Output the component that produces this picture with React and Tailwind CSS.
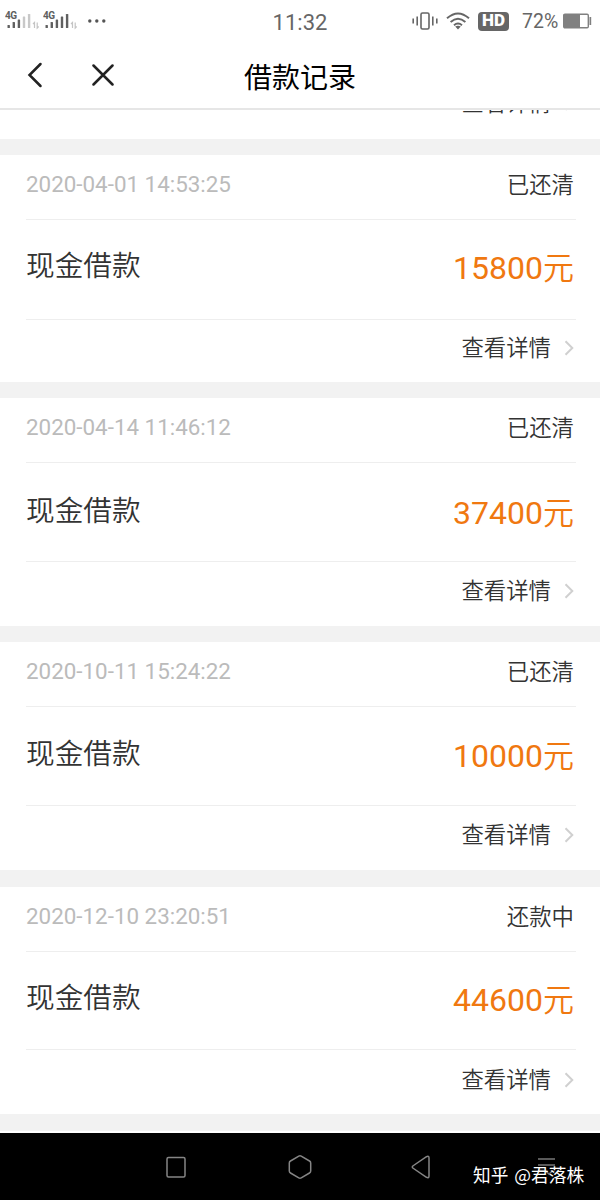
import React from "react";

const LATIN_CJK = "font-[Roboto,'Noto_Sans_CJK_SC',sans-serif]";

const records = [
  { time: "2020-04-01 14:53:25", status: "已还清", amount: "15800", rows: ["h-[65px]", "h-[100px]", "h-[62px]"], gap: "h-4", titlePad: "pb-[5px]", amountPad: "pb-[2px]", linkPad: "pb-[7px]" },
  { time: "2020-04-14 11:46:12", status: "已还清", amount: "37400", rows: ["h-[65px]", "h-[99px]", "h-[64px]"], gap: "h-4", titlePad: "pb-[1px]", amountPad: "pt-[2px]", linkPad: "pb-[6px]" },
  { time: "2020-10-11 15:24:22", status: "已还清", amount: "10000", rows: ["h-[65px]", "h-[99px]", "h-[64px]"], gap: "h-[17px]", titlePad: "pb-[3px]", amountPad: "pt-0", linkPad: "pb-[7px]" },
  { time: "2020-12-10 23:20:51", status: "还款中", amount: "44600", rows: ["h-[65px]", "h-[98px]", "h-[64px]"], gap: "h-[17px]", titlePad: "pb-[3px]", amountPad: "pt-0", linkPad: "pb-[5px]" },
];

function Signal({ bars }) {
  return (
    <svg width="38" height="24" viewBox="0 0 38 24">
      <text x="0" y="9.800" fontSize="10" fontWeight="700" fill="#606060" fontFamily="Roboto, sans-serif" textLength="12">4G</text>
      {[3, 6, 8.5, 11.5, 14].map((h, i) => (
        <rect key={i} x={2.5 + i * 5.1} y={19 - h} width="2.4" height={h} rx="0.6" fill={i < bars ? "#606060" : "#c8c8c8"} />
      ))}
      <path d="M29.500 19v-5.500l-1.500 1.500M32.200 13.500v5.500l1.500-1.500" fill="none" stroke="#c4c4c4" strokeWidth="1.200" />
    </svg>
  );
}

function StatusBar() {
  return (
    <div className="flex h-[42px] items-center text-[#666]">
      <div className="flex w-[200px] items-center pl-[5px]">
        <Signal bars={3} />
        <Signal bars={5} />
        <svg className="ml-[7px]" width="20" height="6" viewBox="0 0 20 6">
          <circle cx="1.800" cy="3" r="1.700" fill="#555" />
          <circle cx="8.800" cy="3" r="1.700" fill="#555" />
          <circle cx="15.800" cy="3" r="1.700" fill="#555" />
        </svg>
      </div>
      <div className="w-[200px] pt-[2px] text-center text-[22px]">11:32</div>
      <div className="flex w-[200px] items-center pl-[12px]">
        <svg width="26" height="18" viewBox="0 0 26 18" fill="none" stroke="#666" strokeWidth="1.600">
          <rect x="9" y="1" width="8" height="16" rx="1.500" />
          <path d="M5.200 4.500v9M1.200 6.500v5M20.800 4.500v9M24.800 6.500v5" />
        </svg>
        <svg className="ml-[8px]" width="24" height="18" viewBox="0 0 24 18" fill="none" stroke="#666" strokeWidth="1.900">
          <path d="M1 6.300Q12-3.500 23 6.300M4.600 10Q12 3.500 19.400 10M8 13.300Q12 9.800 16 13.300" />
          <path d="M9.200 14.500Q12 12.800 14.800 14.500L12 17.500Z" fill="#666" stroke="none" />
        </svg>
        <div className="ml-[8px] flex h-[19px] w-[31px] items-center justify-center rounded-[4px] bg-[#666] text-[17px] font-black text-white">HD</div>
        <div className="ml-[13px] w-[34px] pt-[1px] text-[19.500px] whitespace-nowrap">72%</div>
        <svg className="ml-[7px]" width="29" height="16" viewBox="0 0 29 16">
          <rect x="0.700" y="1.200" width="24.600" height="13.600" rx="1.200" fill="#fff" stroke="#808080" strokeWidth="1.400" />
          <rect x="1" y="1.500" width="16" height="13" fill="#808080" />
          <rect x="26.500" y="4" width="1.700" height="8" fill="#808080" />
        </svg>
      </div>
    </div>
  );
}

function DetailLink() {
  return (
    <div className="flex items-center">
      <span className="text-[22.4px] leading-8 font-[350] text-[#333]">查看详情</span>
      <svg className="ml-[13px]" width="10" height="16" viewBox="0 0 10 16" fill="none" stroke="#d0d0d0" strokeWidth="2">
        <path d="M1.500 1.200L8.300 8L1.500 14.800" />
      </svg>
    </div>
  );
}

function RecordCard({ time, status, amount, rows, gap, titlePad, amountPad, linkPad }) {
  return (
    <>
      <section className="bg-white pr-6 pl-[26px]">
        <div className={`flex items-center justify-between border-b border-[#eee] pr-[2px] pb-[5px] text-[22.4px] ${rows[0]}`}>
          <span className="text-[#bbb]">{time}</span>
          <span className="pt-[2px] font-[350] text-[#333]">{status}</span>
        </div>
        <div className={`flex items-center justify-between border-b border-[#eee] pr-[2px] ${rows[1]}`}>
          <span className={`text-[28.7px] font-[350] text-[#333] ${titlePad}`}>现金借款</span>
          <span className={`text-[32px] text-[#f07810] ${amountPad}`}>{amount}<span className="text-[31px] font-[350]">元</span></span>
        </div>
        <div className={`flex items-center justify-end pr-[2px] ${linkPad} ${rows[2]}`}>
          <DetailLink />
        </div>
      </section>
      <div className={`bg-[#f2f2f2] ${gap}`} />
    </>
  );
}

function NavBar() {
  return (
    <footer className="relative h-[67px] bg-black">
      <div className="flex h-full items-center pl-[162px]">
        <svg width="28" height="28" viewBox="0 0 28 28" fill="none" stroke="#858585" strokeWidth="1.500">
          <rect x="5" y="4.500" width="18" height="19.500" rx="1.500" />
        </svg>
        <svg className="ml-[96px]" width="28" height="28" viewBox="0 0 28 28" fill="none" stroke="#858585" strokeWidth="1.500" strokeLinejoin="round">
          <path d="M12.800 3.200Q14 2.500 15.200 3.200L23.500 8Q24.700 8.700 24.700 10V18Q24.700 19.300 23.500 20L15.200 24.800Q14 25.500 12.800 24.800L4.500 20Q3.300 19.300 3.300 18V10Q3.300 8.700 4.500 8Z" />
        </svg>
        <svg className="ml-[94px]" width="28" height="28" viewBox="0 0 28 28" fill="none" stroke="#858585" strokeWidth="1.500" strokeLinejoin="round">
          <path d="M4.800 13Q3.800 14 4.800 15L18.500 24.300Q21 25.500 21 23V5Q21 2.500 18.500 3.700Z" />
        </svg>
        <svg className="ml-[97px]" width="28" height="28" viewBox="0 0 28 28" fill="none" stroke="#777" strokeWidth="1.500">
          <path d="M5 6H22M5 12H22M5 17.500H12M12 17.500L16 21L20 17.500" />
        </svg>
      </div>
      <div className="absolute top-[27px] left-[473px] font-['Noto_Sans_CJK_SC',sans-serif] text-[17.700px] leading-7 whitespace-nowrap text-white">
        知乎 <span className="ml-[2px]">@</span>君落株
      </div>
    </footer>
  );
}

export default function App() {
  return (
    <div lang="zh-CN" className={`flex h-[1200px] w-[600px] flex-col overflow-hidden bg-white ${LATIN_CJK}`}>
      <StatusBar />
      <header className="flex h-[68px] items-center border-b-2 border-[#e6e6e6]">
        <div className="flex w-[200px] items-center pl-[27px]">
          <svg width="16" height="26" viewBox="0 0 16 26" fill="none" stroke="#222" strokeWidth="2.500" strokeLinecap="round">
            <path d="M13.500 2L2.500 13L13.500 24" />
          </svg>
          <svg className="ml-[49px]" width="22" height="22" viewBox="0 0 22 22" fill="none" stroke="#222" strokeWidth="2.500" strokeLinecap="round">
            <path d="M1.500 1.500L20.500 20.500M20.500 1.500L1.500 20.500" />
          </svg>
        </div>
        <h1 className="w-[200px] pt-[7px] text-center text-[28px] text-black">借款记录</h1>
      </header>
      <div className="flex h-[29px] flex-col overflow-hidden px-[26px]">
        <div className="-mt-[23px] flex justify-end">
          <DetailLink />
        </div>
      </div>
      <div className="h-4 bg-[#f2f2f2]" />
      <main>
        {records.map((r) => (
          <RecordCard key={r.time} {...r} />
        ))}
      </main>
      <div className="flex-1 bg-white" />
      <NavBar />
    </div>
  );
}
